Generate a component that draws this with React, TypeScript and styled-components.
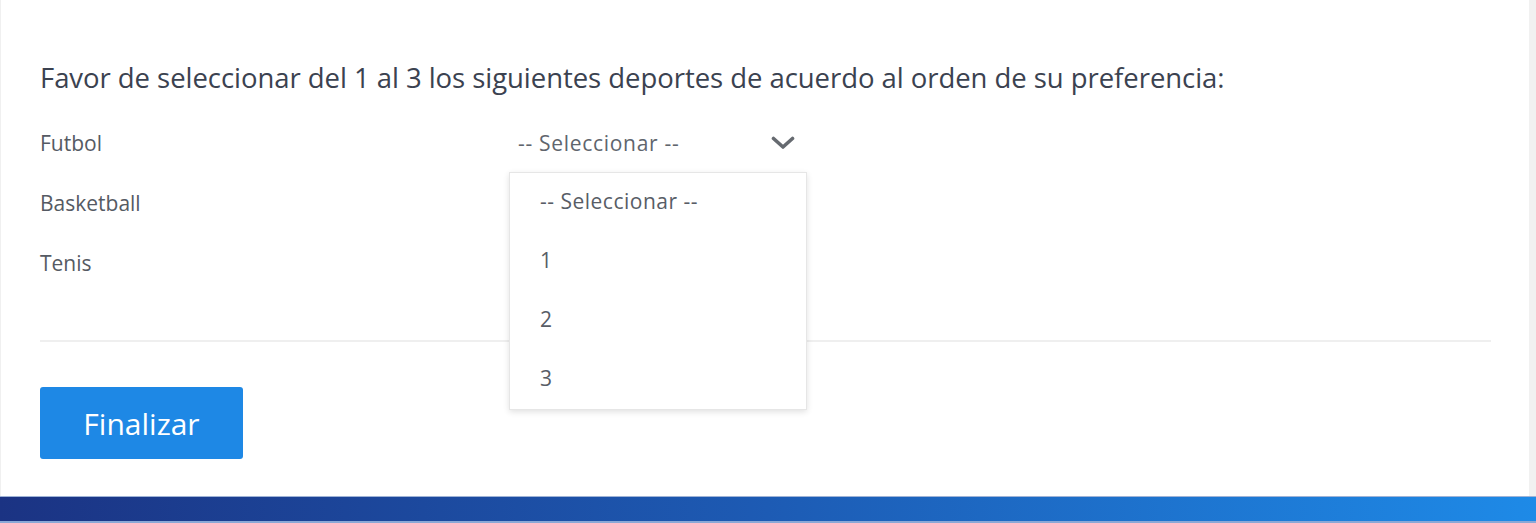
import React from "react";
import styled, { createGlobalStyle } from "styled-components";

const Global = createGlobalStyle`
  html, body {
    margin: 0;
    padding: 0;
    background: #f1f1f1;
  }
  * { box-sizing: border-box; }
`;

const Page = styled.div`
  width: 1536px;
  height: 523px;
  display: flex;
  flex-direction: column;
  font-family: "Open Sans", "Noto Sans", sans-serif;
  overflow: hidden;
`;

const Card = styled.div`
  width: 1529px;
  height: 496px;
  background: #ffffff;
  border-left: 1px solid #f0f0f0;
  padding: 58px 38px 0 39px;
  display: flex;
  flex-direction: column;
`;

const Title = styled.h2`
  margin: 0;
  font-size: 27.5px;
  line-height: 40px;
  font-weight: 400;
  color: #3b4250;
  letter-spacing: -0.05px;
`;

const Form = styled.div`
  margin-top: 15px;
  display: flex;
  flex-direction: column;
`;

const Row = styled.div`
  display: grid;
  grid-template-columns: 469px 298px;
  height: 60px;
  align-items: center;
`;

const Label = styled.span`
  font-size: 21px;
  color: #555a63;
`;

const SelectWrap = styled.div`
  position: relative;
  height: 60px;
`;

const SelectBox = styled.div`
  height: 60px;
  display: flex;
  align-items: center;
  justify-content: space-between;
  padding: 0 12px 0 9px;
  font-size: 21px;
  letter-spacing: 0.7px;
  color: #60656d;
`;

const Menu = styled.ul`
  position: absolute;
  left: 0;
  top: 59px;
  width: 298px;
  margin: 0;
  padding: 0;
  list-style: none;
  background: #ffffff;
  border: 1px solid #e6e6e6;
  box-shadow: 0 2px 6px rgba(0, 0, 0, 0.12);
  z-index: 5;
`;

const Option = styled.li`
  height: 59px;
  display: flex;
  align-items: center;
  padding: 0 0 3px 30px;
  font-size: 21px;
  letter-spacing: 0.5px;
  color: #585d66;
`;

const Divider = styled.hr`
  margin: 47px 0 0 0;
  border: none;
  height: 2px;
  background: #efefef;
`;

const Button = styled.button`
  margin-top: 45px;
  width: 203px;
  height: 72px;
  border: none;
  border-radius: 3px;
  background: #1e88e5;
  color: #ffffff;
  font-family: "Open Sans", "Noto Sans", sans-serif;
  font-size: 30px;
  font-weight: 500;
  padding: 0;
  cursor: pointer;
`;

const Footer = styled.div`
  height: 27px;
  border-top: 1px solid #9fb3d6;
  border-bottom: 2px solid #8aa8d6;
  background: linear-gradient(90deg, #1b3383 0%, #1d5bb4 50%, #1e8ae7 100%);
`;

const Chevron = () => (
  <svg width="24" height="14" viewBox="0 0 24 14" fill="none">
    <path d="M2.5 2.5 L12 11 L21.5 2.5" stroke="#666a70" strokeWidth="3.6" strokeLinecap="round" strokeLinejoin="round" />
  </svg>
);

const sports = ["Futbol", "Basketball", "Tenis"];
const options = ["-- Seleccionar --", "1", "2", "3"];

export default function App() {
  return (
    <>
      <Global />
      <Page>
        <Card>
          <Title>Favor de seleccionar del 1 al 3 los siguientes deportes de acuerdo al orden de su preferencia:</Title>
          <Form>
            {sports.map((s, i) => (
              <Row key={s}>
                <Label>{s}</Label>
                {i === 0 ? (
                  <SelectWrap>
                    <SelectBox>
                      <span>-- Seleccionar --</span>
                      <Chevron />
                    </SelectBox>
                    <Menu>
                      {options.map((o) => (
                        <Option key={o}>{o}</Option>
                      ))}
                    </Menu>
                  </SelectWrap>
                ) : (
                  <span />
                )}
              </Row>
            ))}
          </Form>
          <Divider />
          <Button>Finalizar</Button>
        </Card>
        <Footer />
      </Page>
    </>
  );
}
